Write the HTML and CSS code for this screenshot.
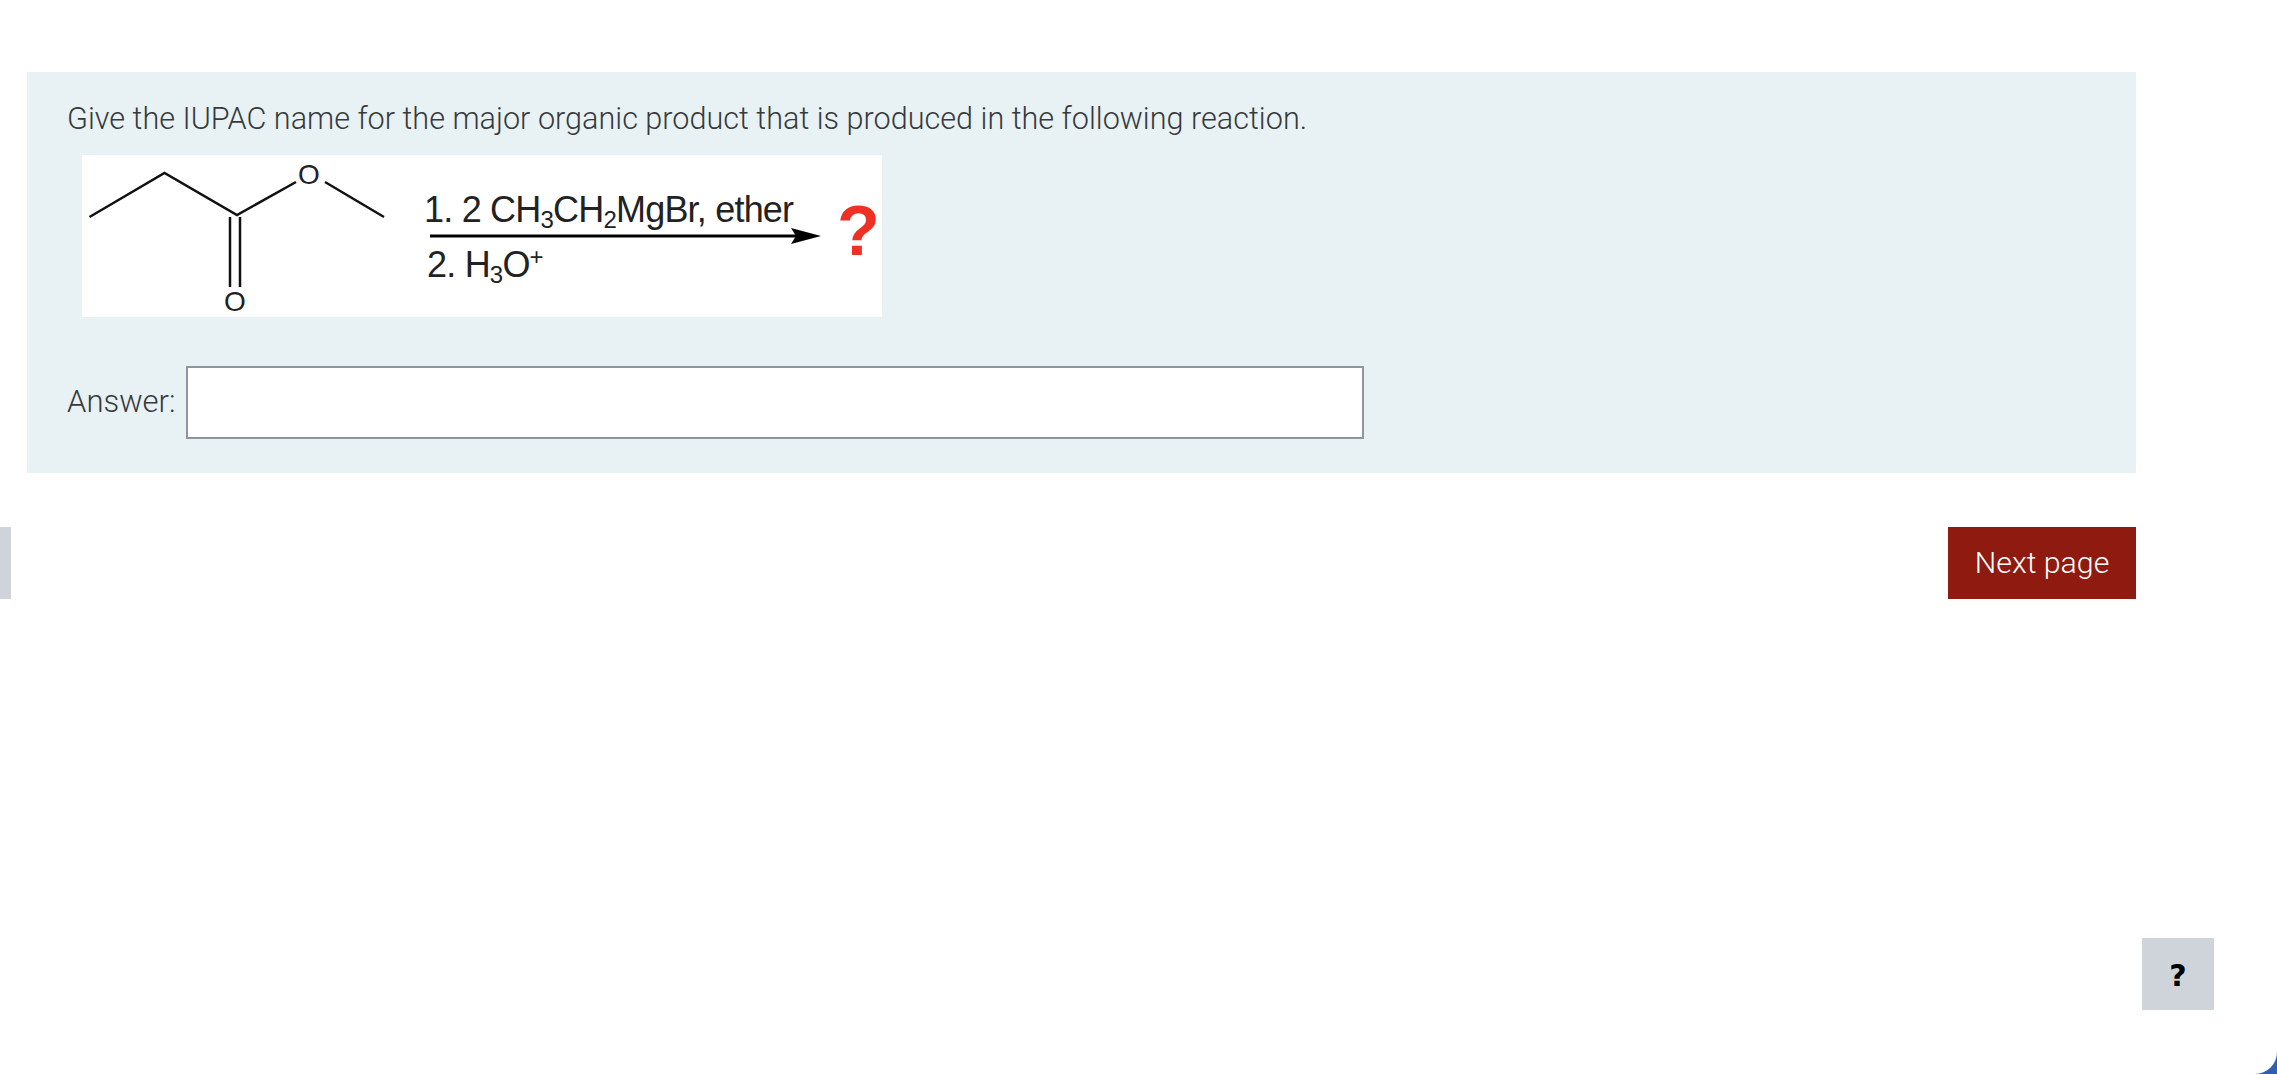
FILE: index.html
```html
<!DOCTYPE html>
<html lang="en">
  <head>
    <meta charset="UTF-8" />
    <meta name="viewport" content="width=device-width, initial-scale=1.0" />
    <title>Question</title>
    <link rel="stylesheet" href="styles.css">
  </head>
  <body>
    <div class="page">
      <div class="question">
        <p class="prompt">Give the IUPAC name for the major organic product that is produced in the following reaction.</p>

        <!-- Reaction scheme -->
        <svg class="scheme" width="800" height="162" viewBox="0 0 800 162">
          <g class="bonds">
            <polyline points="7.5,62 82.5,18 155,60 214,27" />
            <line x1="243" y1="27" x2="302" y2="62" />
            <line x1="148" y1="62" x2="148" y2="132" />
            <line x1="158" y1="62" x2="158" y2="132" />
          </g>
          <text class="atom" x="227" y="29">O</text>
          <text class="atom" x="153" y="156">O</text>
          <text class="reagent" x="342" y="67">1. 2 CH<tspan class="sub" dy="6">3</tspan><tspan dy="-6">CH</tspan><tspan class="sub" dy="6">2</tspan><tspan dy="-6">MgBr, ether</tspan></text>
          <line class="arrow-line" x1="348" y1="81" x2="715" y2="81" />
          <polygon points="709,73 739,81 709,89 714,81" />
          <text class="reagent" x="345" y="122">2. H<tspan class="sub" dy="6">3</tspan><tspan dy="-6">O</tspan><tspan class="sup" dy="-12">+</tspan></text>
          <text class="unknown" x="755" y="100">?</text>
        </svg>

        <div class="answer">
          <label for="answer-input">Answer:</label>
          <input type="text" id="answer-input" />
        </div>
      </div>

      <div class="nav-row">
        <div class="prev-tab"></div>
        <button class="next-btn">Next page</button>
      </div>

      <button class="help-btn">?</button>
    </div>
  </body>
</html>
```

FILE: styles.css
```css
html,
body {
  height: 100%;
}

body {
  margin: 0;
  background-color: #2f60b0;
  font-family: Roboto, "Liberation Sans", sans-serif;
  font-weight: 300;
  color: #373a3c;
}

.page {
  position: relative;
  box-sizing: border-box;
  height: 1074px;
  padding-top: 72px;
  background-color: white;
  border-bottom-right-radius: 22px;
  overflow: hidden;
}

.question {
  box-sizing: border-box;
  width: 2109px;
  height: 401px;
  margin-left: 27px;
  padding: 23px 40px 0;
  background-color: #e8f2f5;
}

.prompt {
  margin: 0;
  height: 60px;
  font-size: 30.6px;
  line-height: 48px;
}

.scheme {
  display: block;
  margin-left: 15px;
  background-color: white;
}

.bonds line,
.bonds polyline {
  fill: none;
  stroke: #111;
  stroke-width: 2.5;
}

.scheme text {
  font-family: "Liberation Sans", sans-serif;
  font-weight: 400;
  fill: #222;
}

.atom {
  font-size: 28px;
  text-anchor: middle;
}

.reagent {
  font-size: 36px;
  letter-spacing: -0.8px;
}

.sub,
.sup {
  font-size: 24px;
}

.arrow-line {
  stroke: #000;
  stroke-width: 3;
}

.scheme .unknown {
  font-size: 70px;
  font-weight: 700;
  fill: #ee3124;
}

.answer {
  display: flex;
  align-items: center;
  margin-top: 49px;
}

.answer label {
  width: 119px;
  flex-shrink: 0;
  padding-bottom: 2px;
  font-size: 31px;
}

.answer input {
  box-sizing: border-box;
  width: 1178px;
  height: 73px;
  border: 2px solid #8f959e;
  background-color: white;
  border-radius: 0;
  outline: none;
}

.nav-row {
  display: flex;
  justify-content: space-between;
  width: 2136px;
  margin-top: 54px;
}

.prev-tab {
  width: 11px;
  height: 72px;
  background-color: #ced4d9;
}

.next-btn {
  width: 188px;
  height: 72px;
  padding: 0 0 2px;
  border: none;
  border-radius: 0;
  background-color: #8e1a10;
  color: white;
  font-family: inherit;
  font-weight: 300;
  font-size: 30.3px;
}

.help-btn {
  position: absolute;
  left: 2142px;
  top: 938px;
  width: 72px;
  height: 72px;
  border: none;
  border-radius: 0;
  padding: 2px 0 0;
  background-color: #ced4d9;
  color: #000;
  font-family: "DejaVu Sans", sans-serif;
  font-weight: 700;
  font-size: 30px;
}
```
